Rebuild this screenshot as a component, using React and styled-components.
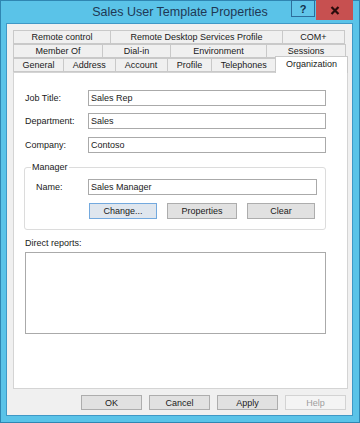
import styled, { createGlobalStyle } from 'styled-components'

const GlobalStyle = createGlobalStyle`
    html, body {
        margin: 0;
        padding: 0;
        background: #ffffff;
    }
    body {
        font-family: "Liberation Sans", Arial, sans-serif;
        font-size: 9px;
        color: #1a1a1a;
    }
`

const Window = styled.div`
    width: 360px;
    height: 423px;
    box-sizing: border-box;
    background: #5ac3e8;
    border: 1px solid #2f86b2;
    display: flex;
    flex-direction: column;
`
const TitleBar = styled.div`
    height: 22px;
    flex: none;
    display: grid;
    grid-template-columns: 1fr auto 1fr;
    align-items: center;
`
const Title = styled.div`
    grid-column: 2;
    font-size: 12.5px;
    color: #1f3854;
    white-space: nowrap;
`
const Caption = styled.div`
    grid-column: 3;
    justify-self: end;
    align-self: start;
    display: flex;
    align-items: flex-start;
    margin-right: 6px;
    margin-top: -1px;
`
const HelpButton = styled.div`
    width: 24px;
    height: 17px;
    box-sizing: border-box;
    border: 1px solid #2d6e9c;
    background: #62c6ea;
    color: #12304d;
    font-weight: 700;
    font-size: 11px;
    display: flex;
    align-items: center;
    justify-content: center;
    margin-right: 1px;
`
const CloseButton = styled.div`
    width: 37px;
    height: 20px;
    background: #c75050;
    display: flex;
    align-items: center;
    justify-content: center;
`
const Client = styled.div`
    flex: 1;
    margin: 0 6px 6px 5px;
    border: 1px solid #3f98c6;
    background: #f0f0f0;
    padding: 6px 4px 5px 6px;
    display: flex;
    flex-direction: column;
`
const TabRow = styled.div`
    display: flex;
    height: 14px;
    align-items: flex-end;
`
const Tab = styled.div`
    box-sizing: border-box;
    width: ${p => p.$w}px;
    height: 14px;
    margin-left: -1px;
    border: 1px solid #c9c9c9;
    background: #f0f0f0;
    text-align: center;
    line-height: 12px;
    white-space: nowrap;
    &:first-child {
        margin-left: 0;
    }
`
const ActiveTab = styled(Tab)`
    height: 17px;
    margin-bottom: -1px;
    border-bottom: none;
    background: #ffffff;
    position: relative;
    z-index: 1;
    line-height: 14px;
`
const Panel = styled.div`
    flex: 1;
    background: #ffffff;
    border: 1px solid #d4d4d4;
    padding: 17px 21px 0 11px;
    display: flex;
    flex-direction: column;
`
const Field = styled.div`
    display: grid;
    grid-template-columns: ${p => p.$label}px 1fr;
    align-items: center;
    margin-top: ${p => p.$top}px;
`
const Input = styled.input`
    box-sizing: border-box;
    height: 16px;
    width: 100%;
    margin: 0;
    padding: 0 2px;
    border: 1px solid #aaaaaa;
    font: inherit;
    color: #1a1a1a;
    background: #fff;
    outline: none;
`
const Group = styled.fieldset`
    margin: 9px 0 0 -1px;
    padding: 0 8px 10px 11px;
    border: 1px solid #dcdcdc;
    border-radius: 3px;
`
const Legend = styled.legend`
    margin-left: -5px;
    padding: 0 1px;
    line-height: 10px;
`
const ButtonRow = styled.div`
    display: flex;
    gap: ${p => p.$gap}px;
    margin-top: ${p => p.$top || 0}px;
    margin-left: ${p => p.$left || 0}px;
    justify-content: ${p => p.$end ? 'flex-end' : 'flex-start'};
    padding-right: ${p => p.$end ? 2 : 0}px;
`
const Button = styled.div`
    box-sizing: border-box;
    width: ${p => p.$w}px;
    height: ${p => p.$h || 16}px;
    border: 1px solid ${p => p.$focus ? '#73a9de' : p.$disabled ? '#d3d3d3' : '#adadad'};
    background: ${p => p.$focus ? '#dfe6ee' : p.$disabled ? '#f4f4f4' : '#e1e1e1'};
    color: ${p => p.$disabled ? '#9d9d9d' : '#1a1a1a'};
    display: flex;
    align-items: center;
    justify-content: center;
`
const Label = styled.div`
    margin-top: ${p => p.$top}px;
    line-height: 10px;
`
const ListBox = styled.div`
    margin-top: 4px;
    height: 82px;
    box-sizing: border-box;
    border: 1px solid #aaaaaa;
    background: #fff;
`

export default function App() {
    return (
        <>
            <GlobalStyle />
            <Window>
                <TitleBar>
                    <Title>Sales User Template Properties</Title>
                    <Caption>
                        <HelpButton>?</HelpButton>
                        <CloseButton>
                            <svg width="10" height="9" viewBox="0 0 10 9">
                                <path d="M1.5 1 L8.5 8 M8.5 1 L1.5 8" stroke="#2a0c0c" strokeWidth="2.2" />
                            </svg>
                        </CloseButton>
                    </Caption>
                </TitleBar>
                <Client>
                    <TabRow>
                        <Tab $w={98}>Remote control</Tab>
                        <Tab $w={173}>Remote Desktop Services Profile</Tab>
                        <Tab $w={63}>COM+</Tab>
                    </TabRow>
                    <TabRow>
                        <Tab $w={90}>Member Of</Tab>
                        <Tab $w={69}>Dial-in</Tab>
                        <Tab $w={97}>Environment</Tab>
                        <Tab $w={80}>Sessions</Tab>
                    </TabRow>
                    <TabRow>
                        <Tab $w={51}>General</Tab>
                        <Tab $w={53}>Address</Tab>
                        <Tab $w={53}>Account</Tab>
                        <Tab $w={46}>Profile</Tab>
                        <Tab $w={65}>Telephones</Tab>
                        <ActiveTab $w={73}>Organization</ActiveTab>
                    </TabRow>
                    <Panel>
                        <Field $label={63} $top={0}>
                            <span>Job Title:</span>
                            <Input defaultValue="Sales Rep" />
                        </Field>
                        <Field $label={63} $top={7}>
                            <span>Department:</span>
                            <Input defaultValue="Sales" />
                        </Field>
                        <Field $label={63} $top={8}>
                            <span>Company:</span>
                            <Input defaultValue="Contoso" />
                        </Field>
                        <Group>
                            <Legend>Manager</Legend>
                            <Field $label={52} $top={7}>
                                <span>Name:</span>
                                <Input defaultValue="Sales Manager" />
                            </Field>
                            <ButtonRow $gap={10} $top={8} $left={53}>
                                <Button $w={68} $focus>Change...</Button>
                                <Button $w={70}>Properties</Button>
                                <Button $w={68}>Clear</Button>
                            </ButtonRow>
                        </Group>
                        <Label $top={8}>Direct reports:</Label>
                        <ListBox />
                    </Panel>
                    <ButtonRow $gap={7} $top={6} $end>
                        <Button $w={61} $h={15}>OK</Button>
                        <Button $w={61} $h={15}>Cancel</Button>
                        <Button $w={61} $h={15}>Apply</Button>
                        <Button $w={61} $h={15} $disabled>Help</Button>
                    </ButtonRow>
                </Client>
            </Window>
        </>
    )
}
